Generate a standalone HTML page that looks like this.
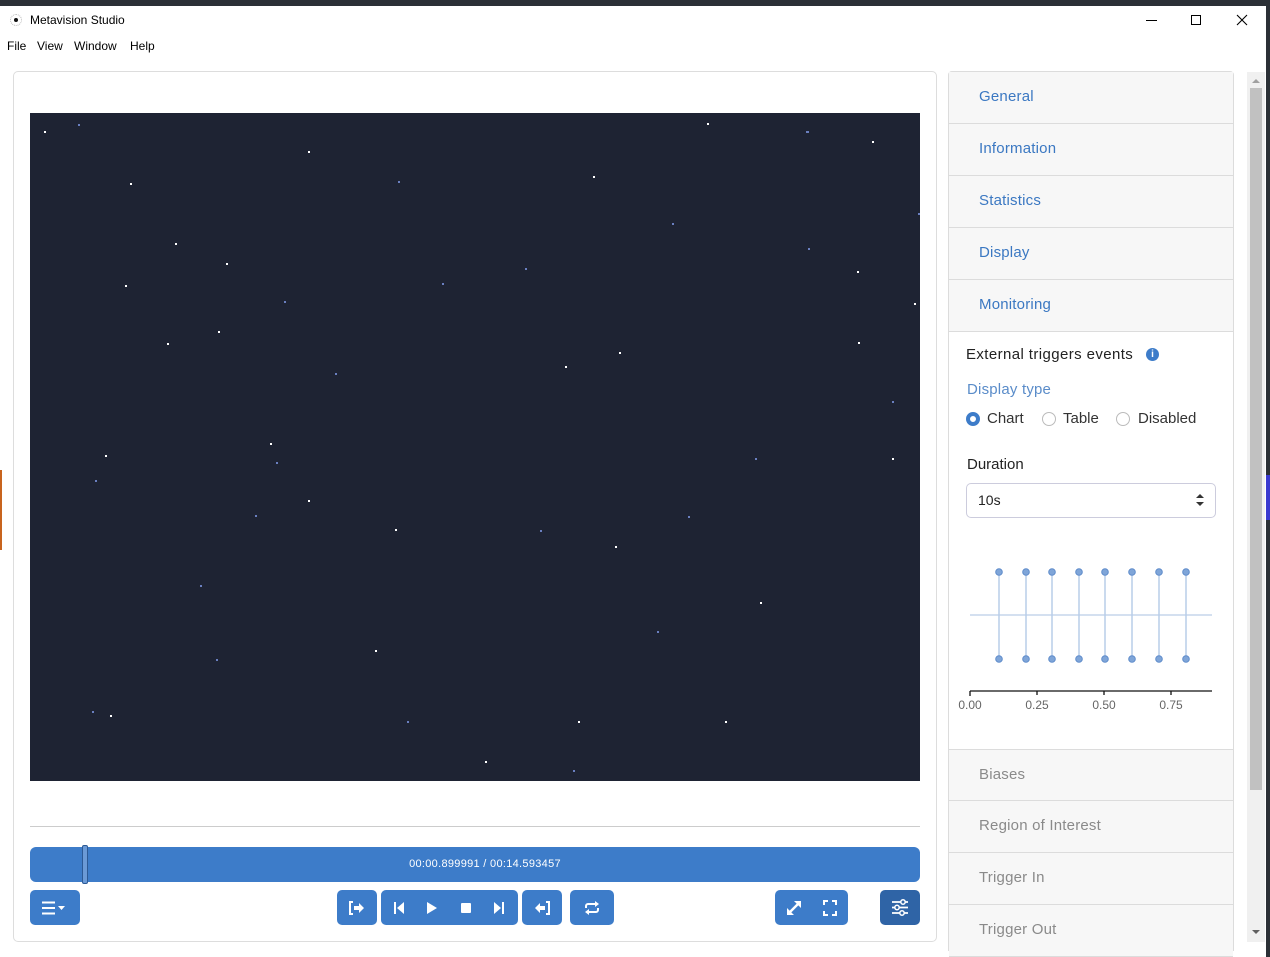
<!DOCTYPE html>
<html><head><meta charset="utf-8"><style>
*{box-sizing:border-box;margin:0;padding:0}
body{width:1270px;height:957px;background:#fff;font-family:"Liberation Sans",sans-serif;position:relative;overflow:hidden}
.abs{position:absolute}
.acc{position:absolute;left:949px;width:284px;height:52px;background:#f7f7f7;border-bottom:1px solid #dcdcdc;font-size:15px;padding:16px 0 0 30px;color:#3b78c2;letter-spacing:0.2px}
.acc.g{color:#8a8a8a}
.btn{position:absolute;top:890px;height:35px;background:#3d7cc9;border-radius:5px}
.btn svg{position:absolute}
</style></head><body>
<div class="abs" style="left:0;top:0;width:1270px;height:6px;background:#2b3036"></div>
<div class="abs" style="left:1266px;top:0;width:4px;height:957px;background:#2b3036"></div>
<div class="abs" style="left:0;top:470px;width:2px;height:80px;background:#c8641e"></div>
<div class="abs" style="left:1266px;top:475px;width:4px;height:45px;background:#3a3ad0"></div>
<div class="abs" style="left:10px;top:14px;width:12px;height:12px;border-radius:50%;border:1px dotted #bbb"></div>
<div class="abs" style="left:14px;top:18px;width:4px;height:4px;border-radius:50%;background:#111"></div>
<div class="abs" style="left:30px;top:13px;font-size:12px;color:#000">Metavision Studio</div>
<div class="abs" style="left:1146px;top:20px;width:11px;height:1px;background:#000"></div>
<div class="abs" style="left:1191px;top:15px;width:10px;height:10px;border:1px solid #000"></div>
<svg class="abs" style="left:1236px;top:14px" width="12" height="12"><path d="M1 1L11 11M11 1L1 11" stroke="#000" stroke-width="1.1"/></svg>
<div class="abs" style="left:7px;top:39px;font-size:12px;color:#000">File</div>
<div class="abs" style="left:37px;top:39px;font-size:12px;color:#000">View</div>
<div class="abs" style="left:74px;top:39px;font-size:12px;color:#000">Window</div>
<div class="abs" style="left:130px;top:39px;font-size:12px;color:#000">Help</div>

<div class="abs" style="left:13px;top:71px;width:924px;height:871px;border:1px solid #ddd;border-radius:5px;background:#fff"></div>
<svg class="abs" style="left:30px;top:113px" width="890" height="668">
<rect width="890" height="668" fill="#1e2333"/>
<g fill="#fff">
<rect x="14" y="18" width="2" height="2"/><rect x="100" y="70" width="2" height="2"/><rect x="145" y="130" width="2" height="2"/><rect x="196" y="150" width="2" height="2"/><rect x="278" y="38" width="2" height="2"/><rect x="563" y="63" width="2" height="2"/><rect x="677" y="10" width="2" height="2"/><rect x="842" y="28" width="2" height="2"/><rect x="589" y="239" width="2" height="2"/><rect x="535" y="253" width="2" height="2"/><rect x="827" y="158" width="2" height="2"/><rect x="884" y="190" width="2" height="2"/><rect x="95" y="172" width="2" height="2"/><rect x="188" y="218" width="2" height="2"/><rect x="278" y="387" width="2" height="2"/><rect x="75" y="342" width="2" height="2"/><rect x="365" y="416" width="2" height="2"/><rect x="585" y="433" width="2" height="2"/><rect x="730" y="489" width="2" height="2"/><rect x="695" y="608" width="2" height="2"/><rect x="455" y="648" width="2" height="2"/><rect x="80" y="602" width="2" height="2"/><rect x="345" y="537" width="2" height="2"/><rect x="137" y="230" width="2" height="2"/><rect x="828" y="229" width="2" height="2"/><rect x="862" y="345" width="2" height="2"/><rect x="548" y="608" width="2" height="2"/><rect x="240" y="330" width="2" height="2"/>
</g>
<g fill="#6a7fc0">
<rect x="48" y="11" width="2" height="2"/><rect x="368" y="68" width="2" height="2"/><rect x="254" y="188" width="2" height="2"/><rect x="412" y="170" width="2" height="2"/><rect x="776" y="18" width="3" height="2"/><rect x="65" y="367" width="2" height="2"/><rect x="246" y="349" width="2" height="2"/><rect x="225" y="402" width="2" height="2"/><rect x="510" y="417" width="2" height="2"/><rect x="658" y="403" width="2" height="2"/><rect x="186" y="546" width="2" height="2"/><rect x="62" y="598" width="2" height="2"/><rect x="377" y="608" width="2" height="2"/><rect x="543" y="657" width="2" height="2"/><rect x="778" y="135" width="2" height="2"/><rect x="642" y="110" width="2" height="2"/><rect x="862" y="288" width="2" height="2"/><rect x="725" y="345" width="2" height="2"/><rect x="627" y="518" width="2" height="2"/><rect x="305" y="260" width="2" height="2"/><rect x="170" y="472" width="2" height="2"/><rect x="495" y="155" width="2" height="2"/><rect x="888" y="100" width="2" height="2"/>
</g>
</svg>
<div class="abs" style="left:30px;top:826px;width:890px;height:1px;background:#ccc"></div>
<div class="abs" style="left:30px;top:847px;width:890px;height:35px;background:#3d7cc9;border-radius:6px;color:#fff;font-size:11px;text-align:center;line-height:35px;letter-spacing:0.3px;padding-left:20px">00:00.899991 / 00:14.593457</div>
<div class="abs" style="left:82px;top:845px;width:6px;height:39px;background:#6b9ad6;border:1px solid #2d5a95;border-radius:2px"></div>

<div class="btn" style="left:30px;width:50px"><svg style="left:12px;top:11px" width="26" height="14"><path d="M0 1.5h13M0 7h13M0 12.5h13" stroke="#fff" stroke-width="2"/><path d="M16 5h7l-3.5 4z" fill="#fff"/></svg></div>
<div class="btn" style="left:337px;width:40px"><svg style="left:12px;top:11px" width="16" height="14"><path d="M4 1H1v12h3" stroke="#fff" stroke-width="2" fill="none"/><path d="M5 5h5V2l5 5-5 5V9H5z" fill="#fff"/></svg></div>
<div class="btn" style="left:381px;width:137px"><svg style="left:12px;top:11px" width="115" height="14"><path d="M1 1h2v12H1zM11 1v12L4 7z" fill="#fff"/><path d="M34 1l10 6-10 6z" fill="#fff"/><rect x="68" y="2" width="10" height="10" rx="1" fill="#fff"/><path d="M109 1h2v12h-2zM101 1v12l7-6z" fill="#fff"/></svg></div>
<div class="btn" style="left:522px;width:40px"><svg style="left:12px;top:11px" width="16" height="14"><path d="M12 1h3v12h-3" stroke="#fff" stroke-width="2" fill="none"/><path d="M1 7l5-5v3h5v4H6v3z" fill="#fff"/></svg></div>
<div class="btn" style="left:570px;width:44px"><svg style="left:14px;top:10px" width="16" height="16"><path d="M2 8V6a2 2 0 0 1 2-2h8M14 8v2a2 2 0 0 1-2 2H4" stroke="#fff" stroke-width="2" fill="none"/><path d="M11 1l4 3-4 3zM5 9l-4 3 4 3z" fill="#fff"/></svg></div>
<div class="btn" style="left:775px;width:73px"><svg style="left:11px;top:10px" width="52" height="16"><path d="M2 14L13 3" stroke="#fff" stroke-width="2.4"/><path d="M8 1h7v7zM1 8v7h7z" fill="#fff"/><path d="M38 5V1h4M46 1h4v4M50 11v4h-4M42 15h-4v-4" stroke="#fff" stroke-width="2" fill="none"/></svg></div>
<div class="btn" style="left:880px;width:40px;background:#2f64a6"><svg style="left:12px;top:9px" width="16" height="17"><path d="M0 3h16M0 8.5h16M0 14h16" stroke="#fff" stroke-width="1.8"/><circle cx="11" cy="3" r="2.2" fill="#2f64a6" stroke="#fff" stroke-width="1.5"/><circle cx="5" cy="8.5" r="2.2" fill="#2f64a6" stroke="#fff" stroke-width="1.5"/><circle cx="10" cy="14" r="2.2" fill="#2f64a6" stroke="#fff" stroke-width="1.5"/></svg></div>

<div class="abs" style="left:948px;top:71px;width:286px;height:880px;border:1px solid #dcdcdc;border-radius:4px 4px 0 0"></div>
<div class="acc" style="top:72px">General</div>
<div class="acc" style="top:124px">Information</div>
<div class="acc" style="top:176px">Statistics</div>
<div class="acc" style="top:228px">Display</div>
<div class="acc" style="top:280px">Monitoring</div>
<div class="abs" style="left:966px;top:346px;font-size:15px;color:#222;letter-spacing:0.4px">External triggers events</div>
<div class="abs" style="left:1146px;top:348px;width:13px;height:13px;border-radius:50%;background:#3d7cc9;color:#fff;font-size:10px;font-weight:bold;text-align:center;line-height:13px">i</div>
<div class="abs" style="left:967px;top:381px;font-size:15px;color:#5a8cc9;letter-spacing:0.2px">Display type</div>
<div class="abs" style="left:966px;top:412px;width:14px;height:14px;border-radius:50%;border:4px solid #3d7cc9"></div>
<div class="abs" style="left:987px;top:410px;font-size:15px;color:#333">Chart</div>
<div class="abs" style="left:1042px;top:412px;width:14px;height:14px;border-radius:50%;border:1px solid #bbb"></div>
<div class="abs" style="left:1063px;top:410px;font-size:15px;color:#333">Table</div>
<div class="abs" style="left:1116px;top:412px;width:14px;height:14px;border-radius:50%;border:1px solid #bbb"></div>
<div class="abs" style="left:1138px;top:410px;font-size:15px;color:#333">Disabled</div>
<div class="abs" style="left:967px;top:456px;font-size:15px;color:#222">Duration</div>
<div class="abs" style="left:966px;top:483px;width:250px;height:35px;border:1px solid #ccd;border-radius:5px;font-size:14px;padding:8px 0 0 11px;color:#222">10s</div>
<svg class="abs" style="left:1195px;top:493px" width="10" height="14"><path d="M1 5l4-4 4 4zM1 9l4 4 4-4z" fill="#333"/></svg>
<svg class="abs" style="left:950px;top:540px" width="283" height="180">
<line x1="20" y1="75" x2="262" y2="75" stroke="#c5d6ec" stroke-width="1.5"/>
<g stroke="#b8cde9" stroke-width="1.5" fill="#7fa5d8">
<line x1="49" y1="32" x2="49" y2="119"/><line x1="76" y1="32" x2="76" y2="119"/><line x1="102" y1="32" x2="102" y2="119"/><line x1="129" y1="32" x2="129" y2="119"/><line x1="155" y1="32" x2="155" y2="119"/><line x1="182" y1="32" x2="182" y2="119"/><line x1="209" y1="32" x2="209" y2="119"/><line x1="236" y1="32" x2="236" y2="119"/>
</g>
<g fill="#7fa5d8" stroke="#5f8ccb" stroke-width="1">
<circle cx="49" cy="32" r="3.3"/><circle cx="76" cy="32" r="3.3"/><circle cx="102" cy="32" r="3.3"/><circle cx="129" cy="32" r="3.3"/><circle cx="155" cy="32" r="3.3"/><circle cx="182" cy="32" r="3.3"/><circle cx="209" cy="32" r="3.3"/><circle cx="236" cy="32" r="3.3"/>
<circle cx="49" cy="119" r="3.3"/><circle cx="76" cy="119" r="3.3"/><circle cx="102" cy="119" r="3.3"/><circle cx="129" cy="119" r="3.3"/><circle cx="155" cy="119" r="3.3"/><circle cx="182" cy="119" r="3.3"/><circle cx="209" cy="119" r="3.3"/><circle cx="236" cy="119" r="3.3"/>
</g>
<path d="M20 156V151M20 151H262M87 151v4M154 151v4M221 151v4" stroke="#111" stroke-width="1.3"/>
<g font-family="Liberation Sans" font-size="12" fill="#666" text-anchor="middle"><text x="20" y="169">0.00</text><text x="87" y="169">0.25</text><text x="154" y="169">0.50</text><text x="221" y="169">0.75</text></g>
</svg>
<div class="acc g" style="top:749px;border-top:1px solid #dcdcdc">Biases</div>
<div class="acc g" style="top:801px">Region of Interest</div>
<div class="acc g" style="top:853px">Trigger In</div>
<div class="acc g" style="top:905px">Trigger Out</div>

<div class="abs" style="left:1247px;top:72px;width:18px;height:870px;background:#f0f0f0"></div>
<div class="abs" style="left:1250px;top:88px;width:12px;height:702px;background:#c1c1c1"></div>
<svg class="abs" style="left:1250px;top:77px" width="12" height="8"><path d="M2 6l4-4 4 4z" fill="#a0a0a0"/></svg>
<svg class="abs" style="left:1250px;top:928px" width="12" height="8"><path d="M2 2l4 4 4-4z" fill="#606060"/></svg>
</body></html>
